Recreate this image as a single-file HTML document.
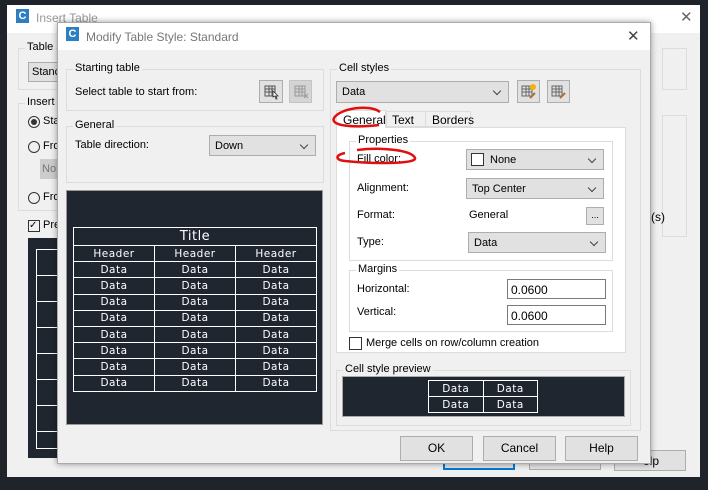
<!DOCTYPE html>
<html><head><style>
*{box-sizing:border-box;margin:0;padding:0}
body{width:708px;height:490px;background:#1f232a;font-family:"Liberation Sans",sans-serif;font-size:11px;color:#000;position:relative;overflow:hidden}
.a{position:absolute}
.grp{position:absolute;border:1px solid #dcdcdc}
.lg{position:absolute;background:#f0f0f0;padding:0 2px;top:-8px;left:6px;font-size:11px}
.dd{position:absolute;background:#e1e1e1;border:1px solid #adadad;padding:4px 5px 0;font-size:11px}
.dd:after{content:"";position:absolute;right:8px;top:6px;width:5px;height:5px;border-right:1px solid #444;border-bottom:1px solid #444;transform:rotate(45deg)}
.btn{position:absolute;background:#e1e1e1;border:1px solid #adadad;text-align:center;line-height:22px;font-size:12px}
.inp{position:absolute;background:#fff;border:1px solid #7a7a7a;padding:3px 3px;font-size:12px}
.dk{position:absolute;background:#202630}
table{border-collapse:collapse;position:absolute;color:#fff;font-family:"DejaVu Sans",sans-serif;font-size:10.5px;letter-spacing:.5px}
td{border:1px solid #fff;text-align:center;height:16.2px;padding:0;line-height:14px}
</style></head><body>
<div class="a" style="left:7px;top:5px;width:693px;height:472px;background:#f0f0f0"></div>
<div class="a" style="left:7px;top:5px;width:693px;height:28px;background:#fff"></div>
<div class="a" style="left:16px;top:9px;width:13px;height:14px;background:#2d7fc1;color:#fff;font-weight:bold;font-size:11px;line-height:14px;text-align:center">C</div>
<div class="a" style="left:36px;top:11px;font-size:12px;color:#999">Insert Table</div>
<div class="a" style="left:680px;top:8px;font-size:15px;color:#666">✕</div>
<div class="grp" style="left:18px;top:48px;width:50px;height:42px"><span class="lg">Table s</span></div>
<div class="a" style="left:28px;top:62px;width:40px;height:20px;background:#e1e1e1;border:1px solid #adadad;padding:3px 3px">Stanc</div>
<div class="grp" style="left:18px;top:103px;width:50px;height:108px"><span class="lg">Insert</span></div>
<div class="a" style="left:28px;top:116px;width:12px;height:12px;border:1px solid #333;border-radius:50%"><div class="a" style="left:2px;top:2px;width:6px;height:6px;background:#333;border-radius:50%"></div></div>
<div class="a" style="left:43px;top:115px">Sta</div>
<div class="a" style="left:28px;top:141px;width:12px;height:12px;border:1px solid #333;border-radius:50%"></div>
<div class="a" style="left:43px;top:140px">Fro</div>
<div class="a" style="left:40px;top:159px;width:20px;height:20px;background:#ccc;color:#777;padding:4px 2px">No</div>
<div class="a" style="left:28px;top:192px;width:12px;height:12px;border:1px solid #333;border-radius:50%"></div>
<div class="a" style="left:43px;top:191px">Fro</div>
<div class="a" style="left:28px;top:220px;width:12px;height:12px;border:1px solid #333;font-size:10px;line-height:10px">✓</div>
<div class="a" style="left:43px;top:219px">Pre</div>
<div class="dk" style="left:28px;top:238px;width:30px;height:220px;"></div>
<div class="a" style="left:36px;top:249px;width:22px;height:200px;border:1px solid #fff;border-right:none;background:repeating-linear-gradient(#202630 0 25px,#fff 25px 26px)"></div>
<div class="grp" style="left:662px;top:48px;width:25px;height:42px"></div>
<div class="grp" style="left:662px;top:115px;width:25px;height:122px"></div>
<div class="a" style="left:651px;top:210px;font-size:12px">(s)</div>
<div class="btn" style="left:443px;top:452px;width:72px;height:18px;border:2px solid #0078d7"></div>
<div class="btn" style="left:529px;top:452px;width:72px;height:18px"></div>
<div class="btn" style="left:614px;top:450px;width:72px;height:21px;text-align:right;padding-right:26px;line-height:20px">elp</div>

<div class="a" style="left:57px;top:22px;width:594px;height:442px;background:#f0f0f0;border:1px solid #aaa;box-shadow:0 0 6px rgba(0,0,0,.4)"></div>
<div class="a" style="left:58px;top:23px;width:592px;height:27px;background:#fff"></div>
<div class="a" style="left:66px;top:27px;width:13px;height:14px;background:#2d7fc1;color:#fff;font-weight:bold;font-size:11px;line-height:14px;text-align:center">C</div>
<div class="a" style="left:86px;top:30px;font-size:12px;color:#777">Modify Table Style: Standard</div>
<div class="a" style="left:627px;top:27px;font-size:15px;color:#444">✕</div>

<div class="grp" style="left:66px;top:69px;width:258px;height:42px"><span class="lg">Starting table</span></div>
<div class="a" style="left:75px;top:86px">Select table to start from:</div>
<div class="a" style="left:259px;top:80px;width:24px;height:23px;background:#e1e1e1;border:1px solid #adadad"><svg width="22" height="21"><rect x="5" y="5" width="10" height="10" fill="none" stroke="#555"/><path d="M5 8h10M5 11h10M9 5v10M12 5v10" stroke="#555"/><path d="M13 10l5 5-2 0 1 3-1 0-1-3-2 1z" fill="#fff" stroke="#333" stroke-width=".8"/></svg></div>
<div class="a" style="left:289px;top:80px;width:23px;height:23px;background:#d4d4d4;border:1px solid #c4c4c4"><svg width="22" height="21"><rect x="5" y="5" width="10" height="10" fill="none" stroke="#999"/><path d="M5 8h10M5 11h10M9 5v10M12 5v10M14 13l4 4M18 13l-4 4" stroke="#999"/></svg></div>

<div class="grp" style="left:66px;top:126px;width:258px;height:57px"><span class="lg">General</span></div>
<div class="a" style="left:75px;top:139px">Table direction:</div>
<div class="dd" style="left:209px;top:135px;width:107px;height:21px">Down</div>

<div class="dk" style="left:66px;top:190px;width:257px;height:235px;border:1px solid #999"></div>
<table style="left:73px;top:227px;width:244px">
<tr><td colspan="3" style="font-size:13px;height:18px">Title</td></tr>
<tr><td>Header</td><td>Header</td><td>Header</td></tr>
<tr><td>Data</td><td>Data</td><td>Data</td></tr>
<tr><td>Data</td><td>Data</td><td>Data</td></tr>
<tr><td>Data</td><td>Data</td><td>Data</td></tr>
<tr><td>Data</td><td>Data</td><td>Data</td></tr>
<tr><td>Data</td><td>Data</td><td>Data</td></tr>
<tr><td>Data</td><td>Data</td><td>Data</td></tr>
<tr><td>Data</td><td>Data</td><td>Data</td></tr>
<tr><td>Data</td><td>Data</td><td>Data</td></tr>
</table>

<div class="grp" style="left:330px;top:69px;width:311px;height:362px"><span class="lg">Cell styles</span></div>
<div class="dd" style="left:336px;top:81px;width:173px;height:22px">Data</div>
<div class="a" style="left:517px;top:80px;width:23px;height:23px;background:#e1e1e1;border:1px solid #adadad"><svg width="21" height="21"><rect x="4" y="5" width="10" height="10" fill="none" stroke="#666"/><path d="M4 8h10M4 11h10M8 5v10M11 5v10" stroke="#666"/><circle cx="15" cy="6" r="3" fill="#f5b400"/><path d="M12 17l5-5" stroke="#b07030" stroke-width="2"/></svg></div>
<div class="a" style="left:547px;top:80px;width:23px;height:23px;background:#e1e1e1;border:1px solid #adadad"><svg width="21" height="21"><rect x="4" y="5" width="10" height="10" fill="none" stroke="#666"/><path d="M4 8h10M4 11h10M8 5v10M11 5v10" stroke="#666"/><path d="M12 17l5-5" stroke="#b07030" stroke-width="2"/></svg></div>

<div class="a" style="left:336px;top:127px;width:290px;height:226px;background:#fff;border:1px solid #dcdcdc"></div>
<div class="a" style="left:336px;top:110px;width:50px;height:18px;background:#fff;border:1px solid #dcdcdc;border-bottom:none;padding:2px 6px;font-size:12px">General</div>
<div class="a" style="left:386px;top:111px;width:40px;height:16px;background:#f0f0f0;border:1px solid #dcdcdc;padding:1px 5px;font-size:12px">Text</div>
<div class="a" style="left:425px;top:111px;width:46px;height:16px;background:#f0f0f0;border:1px solid #dcdcdc;padding:1px 6px;font-size:12px">Borders</div>

<div class="grp" style="left:349px;top:141px;width:264px;height:120px"><span class="lg" style="background:#fff">Properties</span></div>
<div class="a" style="left:357px;top:153px">Fill color:</div>
<div class="dd" style="left:466px;top:149px;width:138px;height:21px;padding-left:23px">None<div class="a" style="left:4px;top:3px;width:13px;height:13px;background:#fff;border:1px solid #333"></div></div>
<div class="a" style="left:357px;top:182px">Alignment:</div>
<div class="dd" style="left:466px;top:178px;width:138px;height:21px">Top Center</div>
<div class="a" style="left:357px;top:209px">Format:</div>
<div class="a" style="left:469px;top:209px">General</div>
<div class="a" style="left:586px;top:207px;width:18px;height:18px;background:#e1e1e1;border:1px solid #adadad;text-align:center;font-size:9px;line-height:14px">...</div>
<div class="a" style="left:357px;top:236px">Type:</div>
<div class="dd" style="left:468px;top:232px;width:138px;height:21px">Data</div>

<div class="grp" style="left:349px;top:270px;width:264px;height:62px"><span class="lg" style="background:#fff">Margins</span></div>
<div class="a" style="left:357px;top:283px">Horizontal:</div>
<div class="inp" style="left:507px;top:279px;width:99px;height:20px">0.0600</div>
<div class="a" style="left:357px;top:306px">Vertical:</div>
<div class="inp" style="left:507px;top:305px;width:99px;height:20px">0.0600</div>
<div class="a" style="left:349px;top:337px;width:13px;height:13px;border:1px solid #333;background:#fff"></div>
<div class="a" style="left:366px;top:337px">Merge cells on row/column creation</div>

<div class="grp" style="left:336px;top:370px;width:295px;height:56px"><span class="lg">Cell style preview</span></div>
<div class="dk" style="left:342px;top:376px;width:283px;height:41px;border:1px solid #aaa"></div>
<table style="left:428px;top:380px;width:110px"><tr><td>Data</td><td>Data</td></tr><tr><td>Data</td><td>Data</td></tr></table>

<div class="btn" style="left:400px;top:436px;width:73px;height:25px">OK</div>
<div class="btn" style="left:483px;top:436px;width:73px;height:25px">Cancel</div>
<div class="btn" style="left:565px;top:436px;width:73px;height:25px">Help</div>

<svg class="a" style="left:0;top:0" width="708" height="490"><path d="M380 112C370 104 340 108 334 118c-4 8 20 10 45 7" fill="none" stroke="#e01010" stroke-width="2.5"/><path d="M357 150c25-3 55 0 58 8 2 6-40 6-70 3-10-1-10-6 0-8" fill="none" stroke="#e01010" stroke-width="2.5"/></svg>
</body></html>
